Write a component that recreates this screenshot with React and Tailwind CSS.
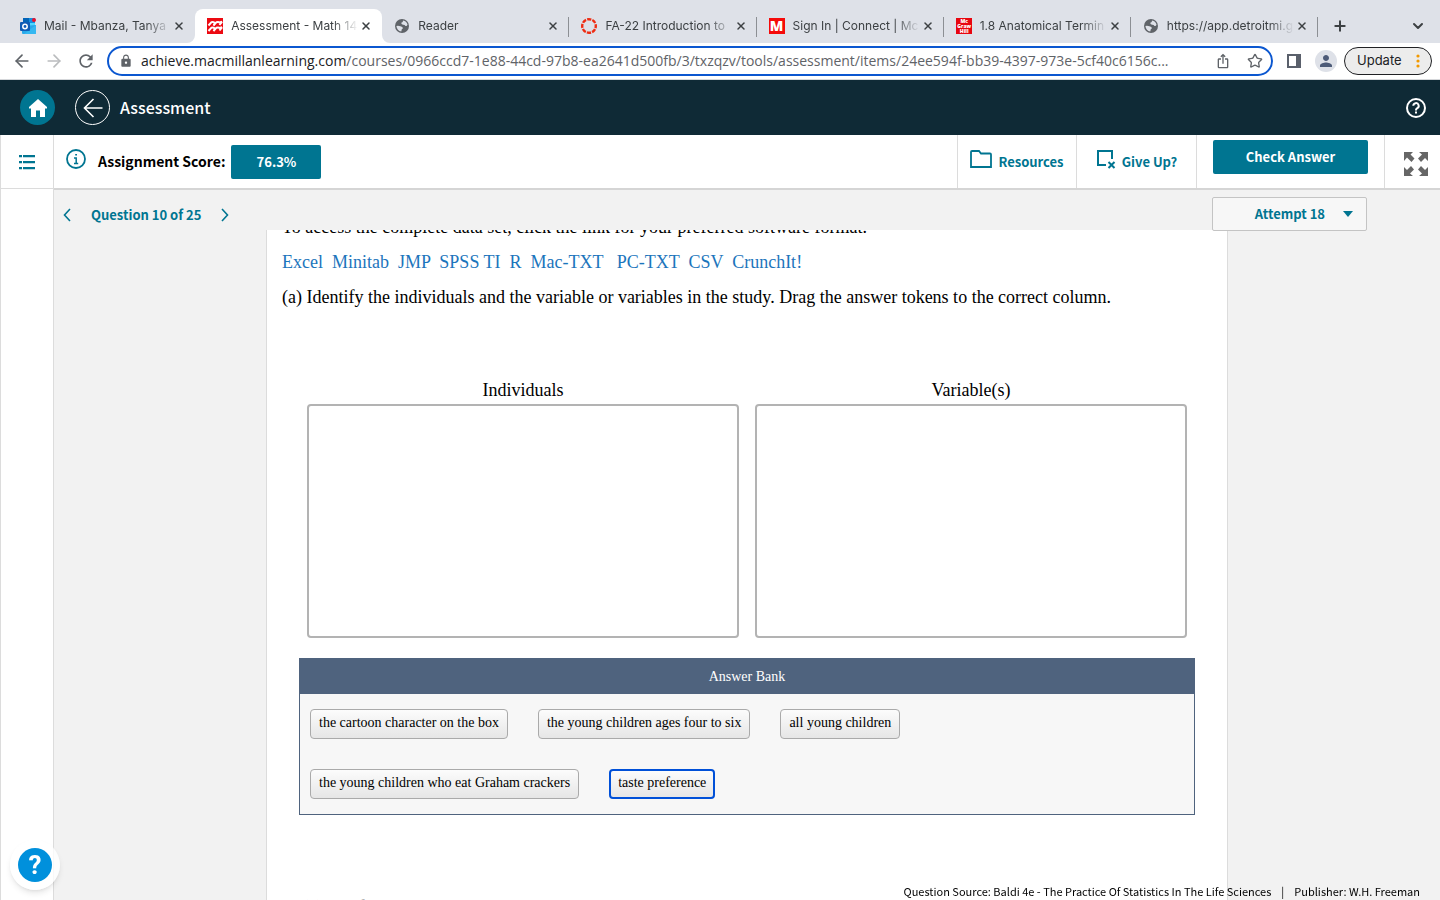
import React, { useState } from "react";
import { ArrowLeft, ArrowRight, ChevronDown, Plus, Star, X } from "lucide-react";
import { MdLock, MdRefresh, MdOutlineIosShare, MdPerson } from "react-icons/md";

const TABS = [
  { id: "mail", title: "Mail - Mbanza, Tanya", icon: "outlook" },
  { id: "assessment", title: "Assessment - Math 14", icon: "macmillan" },
  { id: "reader", title: "Reader", icon: "globe" },
  { id: "canvas", title: "FA-22 Introduction to", icon: "canvas" },
  { id: "connect", title: "Sign In | Connect | Mc", icon: "m" },
  { id: "anatomy", title: "1.8 Anatomical Termin", icon: "mcgraw" },
  { id: "detroit", title: "https://app.detroitmi.g", icon: "globe" },
];

const TOKENS = [
  "the cartoon character on the box",
  "the young children ages four to six",
  "all young children",
  "the young children who eat Graham crackers",
  "taste preference",
];

const TabIcon = ({ type }) => {
  if (type === "outlook") {
    return (
      <svg viewBox="0 0 16 16" className="h-4 w-4 shrink-0">
        <path d="M3 0h12v9H3z" fill="#1490df" />
        <path d="M3 0h6v5H3z" fill="#0364b8" />
        <path d="M9 5h6v5H9z" fill="#50d9ff" />
        <path d="M2 8l14-1v8a1 1 0 0 1-1 1H3a1 1 0 0 1-1-1z" fill="#28a8ea" />
        <path d="M16 7v8a1 1 0 0 1-1 1H4z" fill="#35b8f1" />
        <rect x="0" y="4" width="10" height="9" rx="1" fill="#0f5cb5" />
        <circle cx="5" cy="8.5" r="2.2" fill="none" stroke="#fff" strokeWidth="1.5" />
        <circle cx="14" cy="2" r="2" fill="#e8112d" />
      </svg>
    );
  }
  if (type === "macmillan") {
    return (
      <svg viewBox="0 0 16 16" className="h-4 w-4 shrink-0">
        <path d="M0 0h16v16H0z" fill="#ec0a12" />
        <g fill="none" stroke="#fff" strokeWidth="2" strokeLinejoin="bevel">
          <path d="M1.500 7.500L4.500 4.200Q7 3.500 7.800 5.500L6.500 7.500L9.500 4.200Q11.500 3.500 12.500 4.500L15 3.800L12.500 7" />
          <path d="M1.500 13L4.500 9.700Q7 9 7.800 11L6.500 13L9.500 9.700Q11.500 9 12.500 10L15 9.300L12.500 12.500" />
        </g>
      </svg>
    );
  }
  if (type === "canvas") {
    return (
      <svg viewBox="0 0 16 16" className="h-4 w-4 shrink-0">
        <circle cx="8" cy="8" r="6.8" fill="none" stroke="#ee2c12" strokeWidth="2.4" strokeDasharray="4.2 1.14" strokeDashoffset="2.1" />
      </svg>
    );
  }
  if (type === "m") {
    return (
      <span className="flex h-4 w-4 shrink-0 items-center justify-center bg-[#f50a0a] font-['Open_Sans',sans-serif] text-sm leading-none font-extrabold text-white">
        M
      </span>
    );
  }
  if (type === "mcgraw") {
    return (
      <span className="flex h-4 w-4 shrink-0 flex-col justify-center bg-[#e8060f] pl-px font-['Open_Sans',sans-serif] text-[5px] leading-[5px] font-extrabold text-white">
        <span>Mc</span>
        <span>Graw</span>
        <span>Hill</span>
      </span>
    );
  }
  return (
    <svg viewBox="0 0 16 16" className="h-4 w-4 shrink-0">
      <circle cx="8" cy="8" r="7" fill="#5f6368" />
      <path d="M9 2.500q3.500.500 4.500 4-.500 2-2 1.500-.800-1.500-2.500-1.300Q7 6.500 7.300 4.800 9.300 4.500 9 2.500z" fill="#dee1e8" />
      <path d="M2.400 8q2-.500 4 .3 2.400.400 2.600 2-1.600.600-1.700 3.200Q3 12.800 2.400 8z" fill="#dee1e8" />
    </svg>
  );
};

const BrowserTab = ({ tab, active, divider, onSelect }) => (
  <div
    className={
      active
        ? "relative flex h-[34px] min-w-0 flex-1 items-center rounded-t-lg bg-white pr-2 pl-3"
        : "relative flex h-[34px] min-w-0 flex-1 items-center pr-2 pl-3"
    }
  >
    {active && (
      <>
        <svg viewBox="0 0 8 8" className="absolute bottom-0 -left-2 h-2 w-2" fill="#fff">
          <path d="M8 0v8H0a8 8 0 0 0 8-8z" />
        </svg>
        <svg viewBox="0 0 8 8" className="absolute -right-2 bottom-0 h-2 w-2" fill="#fff">
          <path d="M0 0v8h8a8 8 0 0 1-8-8z" />
        </svg>
      </>
    )}
    <button type="button" onClick={onSelect} className="flex min-w-0 flex-1 items-center gap-2">
      <TabIcon type={tab.icon} />
      <span className="min-w-0 flex-1 overflow-hidden mask-r-from-80% text-left text-xs whitespace-nowrap text-[#3c4043]">
        {tab.title}
      </span>
    </button>
    <button type="button" aria-label={`Close ${tab.title}`} className="flex h-4 w-4 items-center justify-center text-[#3c4043]">
      <X className="h-3 w-3" strokeWidth={3} />
    </button>
    {divider && <span className="absolute top-2 right-0 h-5 w-px bg-[#8c8f94]" />}
  </div>
);

const BrowserChrome = () => {
  const [current, setCurrent] = useState("assessment");

  return (
    <div className="font-[Inter,sans-serif]">
      <div className="flex items-end bg-[#dee1e8] pt-[9px] pl-2">
        <div className="flex min-w-0 flex-1">
          {TABS.map((tab, i) => (
            <BrowserTab
              key={tab.id}
              tab={tab}
              active={tab.id === current}
              divider={i > 1}
              onSelect={() => setCurrent(tab.id)}
            />
          ))}
        </div>
        <div className="flex h-[34px] w-[122px] shrink-0 items-center justify-between px-[14px] text-[#3c4043]">
          <button type="button" aria-label="New tab">
            <Plus className="h-4 w-4" strokeWidth={3} />
          </button>
          <button type="button" aria-label="Search tabs">
            <ChevronDown className="h-4 w-4" strokeWidth={3} />
          </button>
        </div>
      </div>

      <div className="flex h-[37px] items-center border-b border-[#d5d7da] bg-white pr-2 pl-3 text-[#5f6368]">
        <div className="flex w-[95px] shrink-0 items-center gap-3">
          <button type="button" aria-label="Back"><ArrowLeft className="h-5 w-5" /></button>
          <button type="button" aria-label="Forward" className="text-[#babcbe]"><ArrowRight className="h-5 w-5" /></button>
          <button type="button" aria-label="Reload"><MdRefresh className="h-5 w-5" /></button>
        </div>
        <div className="flex h-[30px] min-w-0 flex-1 items-center rounded-full border-2 border-[#0b57d0] pr-2 pl-[10px]">
          <MdLock className="h-[14px] w-[14px] shrink-0" />
          <a
            href="#item"
            className="ml-2 min-w-0 flex-1 truncate font-['Open_Sans',sans-serif] text-sm text-[#5f6368]"
          >
            <span className="text-[#202124]">achieve.macmillanlearning.com</span>
            /courses/0966ccd7-1e88-44cd-97b8-ea2641d500fb/3/txzqzv/tools/assessment/items/24ee594f-bb39-4397-973e-5cf40c6156c...
          </a>
          <button type="button" aria-label="Share" className="mr-4"><MdOutlineIosShare className="h-4 w-4" /></button>
          <button type="button" aria-label="Bookmark"><Star className="h-4 w-4" /></button>
        </div>
        <button type="button" aria-label="Side panel" className="ml-[14px]">
          <svg viewBox="0 0 14 14" className="h-[14px] w-[14px]">
            <path d="M0 0h14v14H0zM2 2v10h7V2z" fill="#5a606b" fillRule="evenodd" />
          </svg>
        </button>
        <button type="button" aria-label="Profile" className="ml-[14px] flex h-[22px] w-[22px] items-center justify-center rounded-full bg-[#dee1e8] text-[#4d5b78]">
          <MdPerson className="h-[18px] w-[18px]" />
        </button>
        <button type="button" className="ml-[7px] flex h-7 w-[88px] items-center justify-between rounded-full border border-[#202124] bg-[#ececec] pr-[11px] pl-3 text-[13px] text-[#202124]">
          Update
          <svg viewBox="0 0 4 14" className="h-[14px] w-1" fill="#f29900">
            <circle cx="2" cy="2" r="1.6" />
            <circle cx="2" cy="7" r="1.6" />
            <circle cx="2" cy="12" r="1.6" />
          </svg>
        </button>
      </div>
    </div>
  );
};

const Header = () => (
  <header className="flex h-[55px] shrink-0 items-center bg-[#0f2a36] pr-[13px] pl-5 text-white">
    <a href="#home" aria-label="Home" className="flex h-[35px] w-[35px] items-center justify-center rounded-full bg-[#007591]">
      <svg viewBox="0 0 18 18" className="h-[18px] w-[18px]" fill="currentColor">
        <path d="M9 0l9 8v1.500h-2V18h-5v-6.500H7V18H2V9.500H0V8z" />
      </svg>
    </a>
    <a href="#back" aria-label="Go back" className="ml-5 flex h-[35px] w-[35px] items-center justify-center rounded-full border border-white">
      <svg viewBox="0 0 20 20" className="h-5 w-5" fill="none" stroke="currentColor" strokeWidth="1.6">
        <path d="M19.500 10H1.500M10.500 1L1.500 10l9 9" />
      </svg>
    </a>
    <h1 className="ml-[10px] pb-0.5 text-base leading-6 font-medium">Assessment</h1>
    <button type="button" aria-label="Help" className="ml-auto">
      <svg viewBox="0 0 22 22" className="h-[22px] w-[22px]" fill="none" stroke="currentColor" strokeWidth="2">
        <circle cx="11" cy="11" r="9" />
        <path d="M8.300 8.800a2.700 2.700 0 1 1 4 2.400q-1.300.700-1.300 1.900v.4M11 14.600v2" />
      </svg>
    </button>
  </header>
);

const Toolbar = () => (
  <div className="flex h-[55px] shrink-0 items-stretch border-b-2 border-[#d5d5d5] bg-white text-[13px] font-bold text-[#007591]">
    <div className="flex items-center pl-3">
      <svg viewBox="0 0 20 20" className="mb-[6px] h-5 w-5" fill="none" stroke="currentColor">
        <circle cx="10" cy="10" r="9" strokeWidth="1.8" />
        <path d="M8 9h2.200v5.500M8 14.500h4.200M9.200 5.800h1.800" strokeWidth="1.5" />
      </svg>
      <span className="ml-3 pb-0.5 text-sm leading-5 text-black">Assignment Score:</span>
      <span className="ml-[6px] flex h-[34px] w-[90px] items-center justify-center rounded-xs bg-[#007591] text-white">
        76.3%
      </span>
    </div>
    <div className="ml-auto flex">
      <button type="button" className="flex w-[119px] items-center justify-center gap-[6px] border-l border-[#dcdcdc] pt-px">
        <svg viewBox="0 0 22 18" className="mb-[6px] h-[18px] w-[22px]" fill="none" stroke="currentColor" strokeWidth="1.8">
          <path d="M1 17V2q0-1 1-1h7l2 2.500h9q1 0 1 1V17z" />
        </svg>
        Resources
      </button>
      <button type="button" className="flex w-[120px] items-center justify-center gap-[6px] border-l border-[#dcdcdc] pt-px">
        <svg viewBox="0 0 20 20" className="mb-[6px] h-5 w-5" fill="none" stroke="currentColor" strokeWidth="2">
          <path d="M10 16H2V2h14v8M12.500 13l6 6M18.500 13l-6 6" />
        </svg>
        Give Up?
      </button>
      <div className="w-[188px] border-l border-[#dcdcdc] px-4 pt-[5px]">
        <button type="button" className="h-[34px] w-full rounded-xs bg-[#007591] pb-px text-white">
          Check Answer
        </button>
      </div>
      <button type="button" aria-label="Full screen" className="flex w-[56px] items-center border-l border-[#dcdcdc] pt-1 pl-[19px]">
        <svg viewBox="0 0 24 24" className="h-6 w-6" fill="#666">
          <path d="M0 0h9L6.500 2.500l4 4-3 3.500L3 5.500 0 9zM24 0v9l-3-3-4 4-3-3.500 4-4L15 0zM0 24v-9l3 3 4-4 3 3.500-4 4L9 24zM24 24h-9l3-2.500-4-4 3-3.500 4 4 3-3z" />
        </svg>
      </button>
    </div>
  </div>
);

const DropColumn = ({ label }) => (
  <section aria-label={label} className="flex-1">
    <h2 className="text-center text-lg leading-7">{label}</h2>
    <div className="h-[234px] rounded-sm border-2 border-[#b3b3b3] bg-white" />
  </section>
);

const Question = () => {
  const [selected, setSelected] = useState("taste preference");

  return (
    <article className="mx-auto min-h-0 w-full max-w-[962px] flex-1 overflow-hidden border-x border-[#dcdcdc] bg-white px-[15px] font-['Liberation_Serif',serif] text-lg text-black">
      <p className="-mt-[17px] leading-7">To access the complete data set, click the link for your preferred software format.</p>
      <p className="mt-[7px] leading-7 whitespace-pre text-[#1c75bc]">
        <a href="#excel">Excel</a>{"  "}
        <a href="#minitab">Minitab</a>{"  "}
        <a href="#jmp">JMP</a>{"  "}
        <a href="#spss">SPSS</a>{" "}
        <a href="#ti">TI</a>{"  "}
        <a href="#r">R</a>{"  "}
        <a href="#mac">Mac-TXT</a>{"   "}
        <a href="#pc">PC-TXT</a>{"  "}
        <a href="#csv">CSV</a>{"  "}
        <a href="#crunchit">CrunchIt!</a>
      </p>
      <p className="mt-[7px] leading-7">
        (a) Identify the individuals and the variable or variables in the study. Drag the answer tokens to the correct column.
      </p>

      <div className="mt-[65px] flex gap-4 px-[25px]">
        <DropColumn label="Individuals" />
        <DropColumn label="Variable(s)" />
      </div>

      <section className="mx-[17px] mt-5 border border-[#4f637e] bg-[#f7f7f7]">
        <h2 className="bg-[#4f637e] text-center text-sm leading-[35px] text-white">Answer Bank</h2>
        <div className="flex flex-wrap gap-[30px] px-[10px] py-[15px]">
          {TOKENS.map((token) => (
            <button
              key={token}
              type="button"
              onClick={() => setSelected(token)}
              className={
                token === selected
                  ? "h-[30px] rounded-sm border-2 border-[#0050d8] bg-linear-to-b from-[#fcfcfc] to-[#e6e6e6] px-[7px] pb-0.5 text-sm leading-5"
                  : "h-[30px] rounded-sm border border-[#aaa] bg-linear-to-b from-[#fcfcfc] to-[#e6e6e6] px-2 pb-0.5 text-sm leading-5"
              }
            >
              {token}
            </button>
          ))}
        </div>
      </section>

      <p className="mt-[78px] px-5 leading-7 text-[#999]">(b) Briefly describe the study design and discuss</p>
    </article>
  );
};

export default function App() {
  return (
    <div className="flex h-screen flex-col overflow-hidden bg-[#f2f2f2] font-['Noto_Sans_CJK_SC',sans-serif]">
      <BrowserChrome />
      <Header />
      <div className="flex min-h-0 flex-1">
        <aside className="w-[54px] shrink-0 border-x border-[#dcdcdc] bg-white">
          <button type="button" aria-label="Question list" className="flex h-[54px] w-full items-center justify-center border-b border-[#dcdcdc] text-[#007591]">
            <svg viewBox="0 0 16 16" className="h-4 w-4" fill="currentColor">
              <path d="M0 1h3v2.200H0zM4 1h12v2.200H4zM0 7h3v2.200H0zM4 7h12v2.200H4zM0 13h3v2.200H0zM4 13h12v2.200H4z" />
            </svg>
          </button>
        </aside>

        <main className="flex min-w-0 flex-1 flex-col">
          <Toolbar />
          <div className="flex h-10 shrink-0 items-start justify-between pr-[73px] pl-[9px] text-[13px] font-bold text-[#007591]">
            <nav className="mt-[15px] flex items-center gap-5 leading-5">
              <button type="button" aria-label="Previous question">
                <svg viewBox="0 0 8 14" className="h-[14px] w-2" fill="none" stroke="currentColor" strokeWidth="1.6">
                  <path d="M7 1L1.500 7 7 13" />
                </svg>
              </button>
              <span>Question 10 of 25</span>
              <button type="button" aria-label="Next question">
                <svg viewBox="0 0 8 14" className="h-[14px] w-2" fill="none" stroke="currentColor" strokeWidth="1.6">
                  <path d="M1 1l5.500 6L1 13" />
                </svg>
              </button>
            </nav>
            <button type="button" className="relative z-10 mt-[7px] flex h-[34px] w-[155px] shrink-0 items-center justify-end gap-[18px] rounded-xs border border-[#c4c4c4] bg-[#f7f7f7] pr-[13px] pb-px">
              Attempt 18
              <svg viewBox="0 0 10 6" className="h-[6px] w-[10px]" fill="currentColor">
                <path d="M0 0h10L5 6z" />
              </svg>
            </button>
          </div>
          <div className="flex min-h-0 flex-1">
            <Question />
          </div>
        </main>
      </div>

      <a href="#support" aria-label="Support" className="fixed bottom-[10px] left-[10px] flex h-[50px] w-[50px] items-center justify-center rounded-full bg-white/80 shadow-md">
        <span className="flex h-[34px] w-[34px] items-center justify-center rounded-full bg-[#0090dc] font-[Roboto,sans-serif] text-[26px] leading-none font-bold text-white">?</span>
      </a>
      <footer className="fixed right-5 bottom-px flex text-[11px] leading-4 text-black">
        <span>Question Source: Baldi 4e - The Practice Of Statistics In The Life Sciences</span>
        <span className="mx-[10px]">|</span>
        <span>Publisher: W.H. Freeman</span>
      </footer>
    </div>
  );
}
